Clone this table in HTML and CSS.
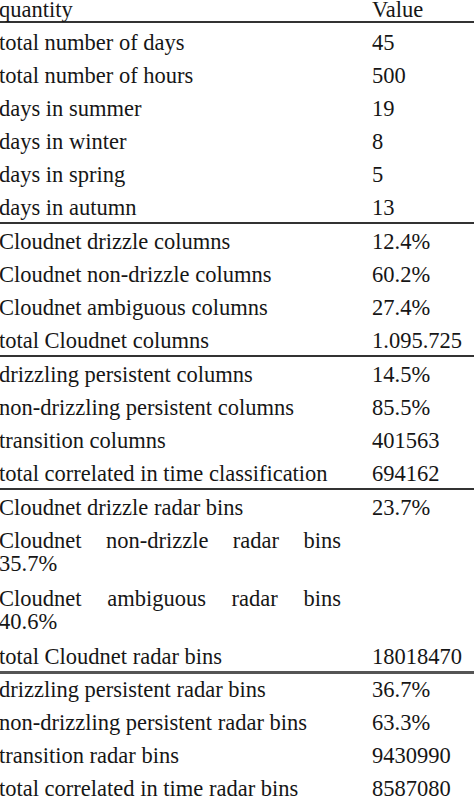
FILE: index.html
```html
<!DOCTYPE html>
<html>
<head>
<meta charset="utf-8">
<link rel="stylesheet" href="styles.css">
</head>
<body>
<table class="tbl">
  <thead>
    <tr class="head"><th class="q">quantity</th><th class="v">Value</th></tr>
  </thead>
  <tbody class="first">
    <tr><td class="q">total number of days</td><td class="v">45</td></tr>
    <tr><td class="q">total number of hours</td><td class="v">500</td></tr>
    <tr><td class="q">days in summer</td><td class="v">19</td></tr>
    <tr><td class="q">days in winter</td><td class="v">8</td></tr>
    <tr><td class="q">days in spring</td><td class="v">5</td></tr>
    <tr><td class="q">days in autumn</td><td class="v">13</td></tr>
  </tbody>
  <tbody class="sep">
    <tr><td class="q">Cloudnet drizzle columns</td><td class="v">12.4%</td></tr>
    <tr><td class="q">Cloudnet non-drizzle columns</td><td class="v">60.2%</td></tr>
    <tr><td class="q">Cloudnet ambiguous columns</td><td class="v">27.4%</td></tr>
    <tr><td class="q">total Cloudnet columns</td><td class="v">1.095.725</td></tr>
  </tbody>
  <tbody class="sep">
    <tr><td class="q">drizzling persistent columns</td><td class="v">14.5%</td></tr>
    <tr><td class="q">non-drizzling persistent columns</td><td class="v">85.5%</td></tr>
    <tr><td class="q">transition columns</td><td class="v">401563</td></tr>
    <tr><td class="q">total correlated in time classification</td><td class="v">694162</td></tr>
  </tbody>
  <tbody class="sep">
    <tr><td class="q">Cloudnet drizzle radar bins</td><td class="v">23.7%</td></tr>
    <tr><td class="q wrap">Cloudnet non-drizzle radar bins 35.7%</td><td class="v"></td></tr>
    <tr><td class="q wrap">Cloudnet ambiguous radar bins 40.6%</td><td class="v"></td></tr>
    <tr><td class="q">total Cloudnet radar bins</td><td class="v">18018470</td></tr>
  </tbody>
  <tbody class="sep thick">
    <tr><td class="q">drizzling persistent radar bins</td><td class="v">36.7%</td></tr>
    <tr><td class="q">non-drizzling persistent radar bins</td><td class="v">63.3%</td></tr>
    <tr><td class="q">transition radar bins</td><td class="v">9430990</td></tr>
    <tr><td class="q">total correlated in time radar bins</td><td class="v">8587080</td></tr>
  </tbody>
</table>
</body>
</html>
```

FILE: styles.css
```css
html, body {
  margin: 0;
  padding: 0;
  background: #ffffff;
  overflow: hidden;
}
body {
  width: 474px;
  height: 802px;
}
.tbl {
  border-collapse: collapse;
  font-family: "Liberation Serif", "DejaVu Serif", serif;
  font-size: 22.5px;
  color: #161616;
  margin-left: -1px;
  table-layout: fixed;
  width: 540px;
}
.tbl th, .tbl td {
  font-weight: normal;
  text-align: left;
  vertical-align: top;
  line-height: 25px;
  padding: 4px 0;
  white-space: nowrap;
}
.tbl .q {
  width: 342px;
  padding-right: 31px;
}
.tbl .head th {
  line-height: 20px;
  padding-top: 0;
  padding-bottom: 1px;
  border-bottom: 2px solid #333;
}
.tbl tbody.first tr:first-child td {
  padding-top: 7px;
}
.tbl tbody tr:last-child td {
  padding-bottom: 2px;
}
.tbl tbody.thick tr:last-child td {
  padding-bottom: 4px;
}
.tbl tbody.sep tr:first-child td {
  border-top: 2px solid #333;
  padding-top: 5px;
}
.tbl tbody.thick tr:first-child td {
  border-top: 3px solid #555;
  padding-top: 3px;
}
.tbl .wrap {
  white-space: normal;
  text-align: justify;
  text-align-last: left;
  line-height: 23px;
  padding-top: 5px;
  padding-bottom: 7px;
}
```
